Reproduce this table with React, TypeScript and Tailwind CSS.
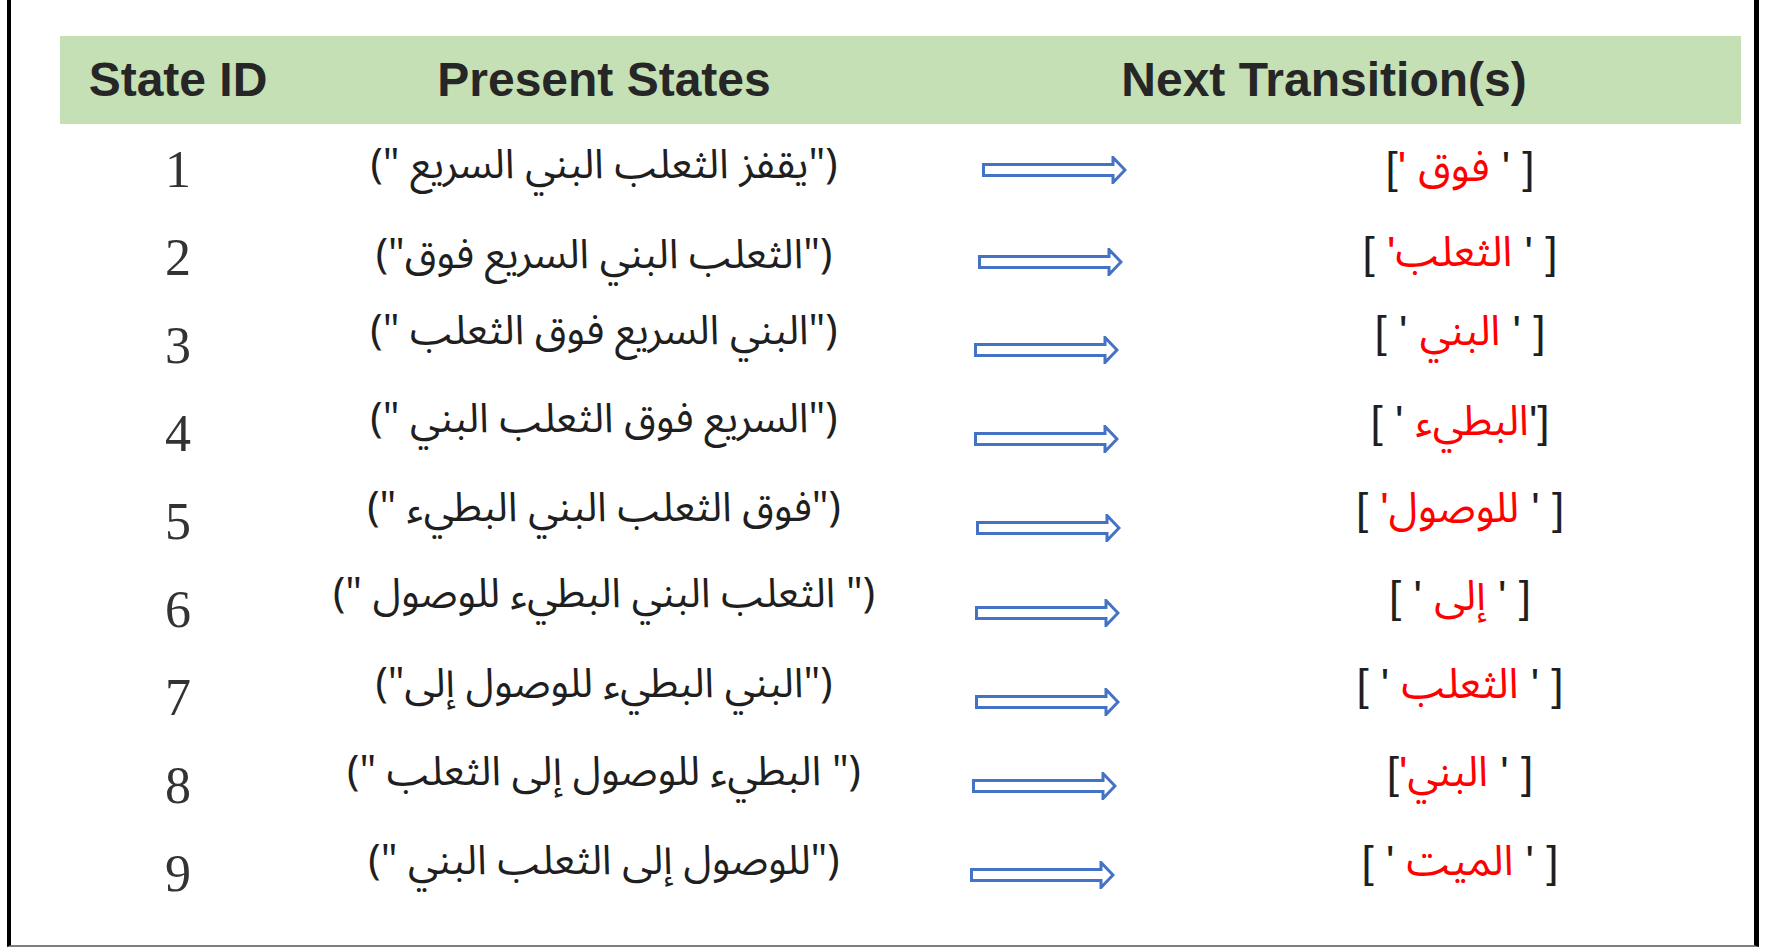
import React from "react";

type Piece = { t: string; red?: boolean; ar?: boolean };
type Row = {
  n: string;
  text: string;
  arrowPad: string;
  textPad: string;
  brPad: string;
  pieces: Piece[];
};

const rows: Row[] = [
  {
    n: "1",
    text: '("يقفز الثعلب البني السريع ")',
    arrowPad: "pl-[70px] pt-[4px]",
    textPad: "pb-[4px]",
    brPad: "pb-[0px]",
    pieces: [{ t: "[" }, { t: "'", red: true }, { t: " " }, { t: "فوق", red: true, ar: true }, { t: " ' " }, { t: "]" }],
  },
  {
    n: "2",
    text: '("الثعلب البني السريع فوق")',
    arrowPad: "pl-[66px] pt-[12px]",
    textPad: "pb-[0px]",
    brPad: "pb-[6px]",
    pieces: [{ t: "[ " }, { t: "'", red: true }, { t: "الثعلب", red: true, ar: true }, { t: " ' " }, { t: "]" }],
  },
  {
    n: "3",
    text: '("البني السريع فوق الثعلب ")',
    arrowPad: "pl-[62px] pt-[12px]",
    textPad: "pb-[24px]",
    brPad: "pb-[24px]",
    pieces: [{ t: "[ ' " }, { t: "البني", red: true, ar: true }, { t: " ' " }, { t: "]" }],
  },
  {
    n: "4",
    text: '("السريع فوق الثعلب البني ")',
    arrowPad: "pl-[62px] pt-[14px]",
    textPad: "pb-[24px]",
    brPad: "pb-[20px]",
    pieces: [{ t: "[ ' " }, { t: "البطيء", red: true, ar: true }, { t: "'" }, { t: "]" }],
  },
  {
    n: "5",
    text: '("فوق الثعلب البني البطيء ")',
    arrowPad: "pl-[64px] pt-[16px]",
    textPad: "pb-[22px]",
    brPad: "pb-[22px]",
    pieces: [{ t: "[ " }, { t: "'", red: true }, { t: "للوصول", red: true, ar: true }, { t: " ' " }, { t: "]" }],
  },
  {
    n: "6",
    text: '(" الثعلب البني البطيء للوصول ")',
    arrowPad: "pl-[63px] pt-[10px]",
    textPad: "pb-[26px]",
    brPad: "pb-[22px]",
    pieces: [{ t: "[ ' " }, { t: "إلى", red: true, ar: true }, { t: " ' " }, { t: "]" }],
  },
  {
    n: "7",
    text: '("البني البطيء للوصول إلى")',
    arrowPad: "pl-[63px] pt-[12px]",
    textPad: "pb-[22px]",
    brPad: "pb-[22px]",
    pieces: [{ t: "[ ' " }, { t: "الثعلب", red: true, ar: true }, { t: " ' " }, { t: "]" }],
  },
  {
    n: "8",
    text: '(" البطيء للوصول إلى الثعلب ")',
    arrowPad: "pl-[60px] pt-[4px]",
    textPad: "pb-[22px]",
    brPad: "pb-[22px]",
    pieces: [{ t: "[" }, { t: "'", red: true }, { t: "البني", red: true, ar: true }, { t: " ' " }, { t: "]" }],
  },
  {
    n: "9",
    text: '("للوصول إلى الثعلب البني ")',
    arrowPad: "pl-[58px] pt-[6px]",
    textPad: "pb-[20px]",
    brPad: "pb-[20px]",
    pieces: [{ t: "[ ' " }, { t: "الميت", red: true, ar: true }, { t: " ' " }, { t: "]" }],
  },
];

function Arrow() {
  return (
    <svg width="145" height="28" viewBox="0 0 145 28" className="block">
      <path
        d="M1.5 8.5 H131 V1.5 L143 14 L131 26.5 V19.5 H1.5 Z"
        fill="#ffffff"
        stroke="#4472c4"
        strokeWidth="3"
        strokeLinejoin="miter"
      />
    </svg>
  );
}

export default function App() {
  return (
    <div className="w-[1766px] h-[947px] bg-white overflow-hidden">
      <div className="ml-[7px] w-[1752px] h-[947px] border-l-4 border-r-[5px] border-b-2 border-l-black border-r-black border-b-[#7f7f7f] pt-[36px] pl-[49px]">
        <div className="flex h-[88px] w-[1681px] items-center bg-[#c5e0b4] font-['Liberation_Sans',Arial,sans-serif] text-[48px] font-bold text-[#262626]">
          <div className="w-[236px] text-center">State ID</div>
          <div className="w-[616px] text-center">Present States</div>
          <div className="w-[824px] text-center">Next Transition(s)</div>
        </div>
        {rows.map((r) => (
          <div key={r.n} className="flex h-[88px] w-[1681px] items-stretch">
            <div className="w-[236px] flex items-center justify-center pt-[4px] font-['Liberation_Serif','Times_New_Roman',serif] text-[52px] leading-[1.1] text-[#333333]">
              {r.n}
            </div>
            <div className={`w-[616px] flex items-center justify-center ${r.textPad}`}>
              <div
                dir="rtl"
                className="text-center text-[41px] leading-[1.1] text-[#1f1f1f] font-['Noto_Sans_Arabic','Liberation_Sans','DejaVu_Sans',sans-serif]"
              >
                {r.text}
              </div>
            </div>
            <div className={`w-[282px] flex items-center ${r.arrowPad}`}>
              <Arrow />
            </div>
            <div
              dir="ltr"
              className={`w-[532px] flex items-center justify-center whitespace-pre text-[44px] leading-[1.1] text-[#1f1f1f] ${r.brPad}`}
            >
              {r.pieces.map((p, i) => (
                <span
                  key={i}
                  className={`${p.red ? "text-[#ff0000]" : ""} ${
                    p.ar
                      ? "text-[42px] font-['Noto_Sans_Arabic','DejaVu_Sans',sans-serif]"
                      : "font-['Liberation_Sans',Arial,sans-serif]"
                  }`}
                >
                  {p.t}
                </span>
              ))}
            </div>
          </div>
        ))}
      </div>
    </div>
  );
}
